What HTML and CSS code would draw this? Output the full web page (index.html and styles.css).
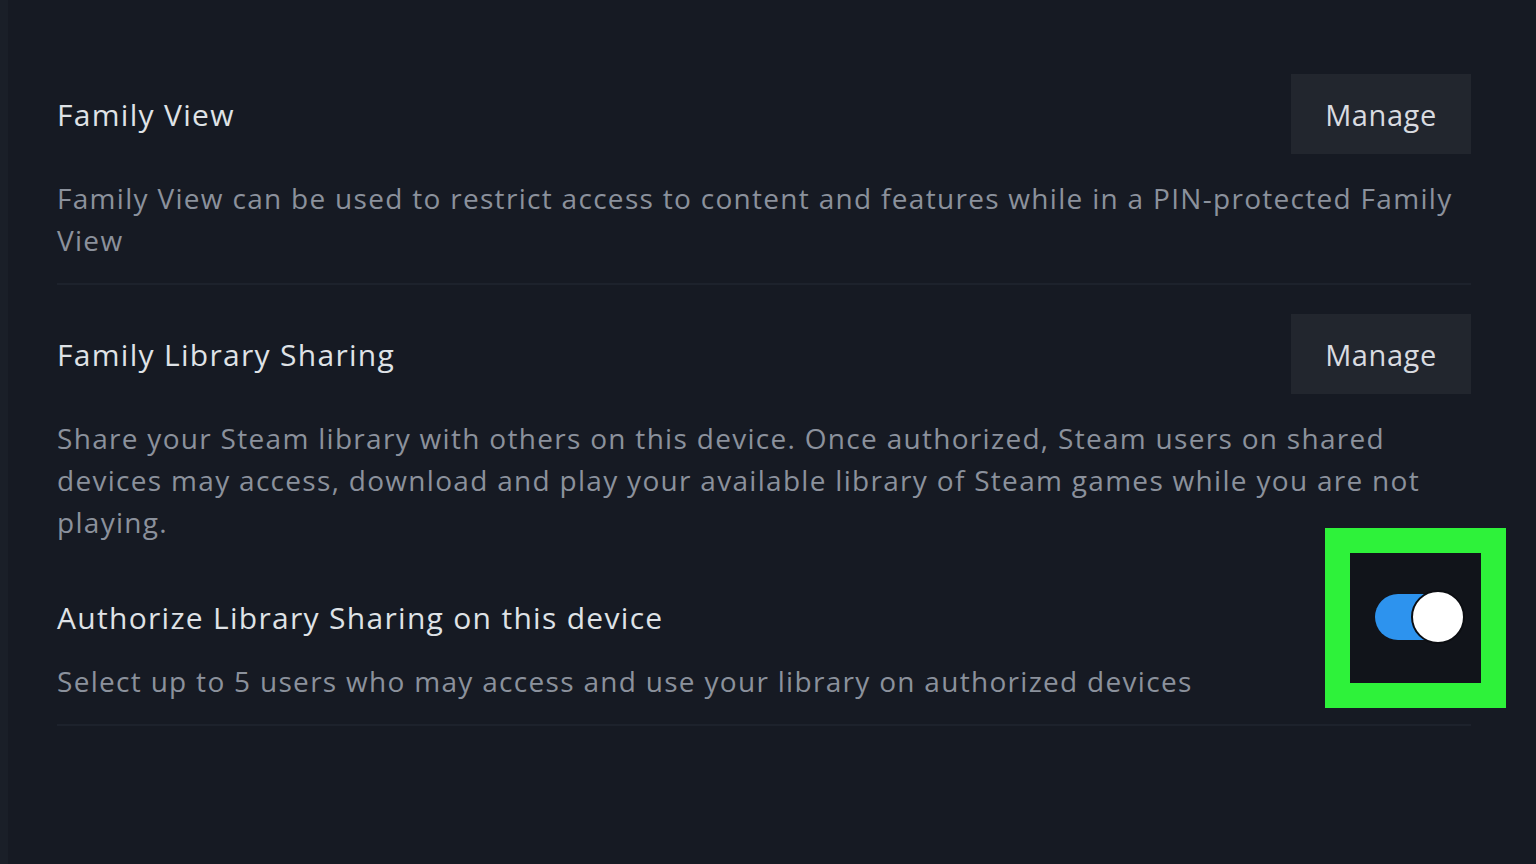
FILE: index.html
```html
<!DOCTYPE html>
<html lang="en">

<head>
    <meta charset="UTF-8">
    <meta name="viewport" content="width=device-width, initial-scale=1.0">
    <title>Family Settings</title>
    <link rel="stylesheet" href="styles.css">
</head>

<body>
    <div class="settings">
        <div class="section">
            <div class="row">
                <div class="title">Family View</div>
                <button class="btn-manage">Manage</button>
            </div>
            <div class="desc">Family View can be used to restrict access to content and features while in a PIN-protected Family View</div>
        </div>

        <div class="section">
            <div class="row">
                <div class="title">Family Library Sharing</div>
                <button class="btn-manage">Manage</button>
            </div>
            <div class="desc">Share your Steam library with others on this device. Once authorized, Steam users on shared devices may access, download and play your available library of Steam games while you are not playing.</div>

            <div class="row row-toggle">
                <div class="title">Authorize Library Sharing on this device</div>
                <div class="toggle-wrap">
                    <!-- highlight box from the screenshot -->
                    <div class="highlight"></div>
                    <div class="toggle on">
                        <div class="knob"></div>
                    </div>
                </div>
            </div>
            <div class="desc">Select up to 5 users who may access and use your library on authorized devices</div>
        </div>
    </div>
</body>

</html>
```

FILE: styles.css
```css
body {
    margin: 0;
    padding: 0;
    background-color: #161a23;
    font-family: "Open Sans", "Noto Sans", sans-serif;
    height: 864px;
    overflow: hidden;
    border-left: 8px solid #1a1f28;
    box-sizing: border-box;
}

.settings {
    padding: 74px 65px 0 49px;
}

.section {
    border-bottom: 2px solid #1d222c;
    padding-bottom: 22px;
    margin-bottom: 29px;
}

.row {
    display: flex;
    align-items: center;
    justify-content: space-between;
    height: 80px;
}

.title {
    font-size: 30px;
    color: #dfe2e6;
    letter-spacing: 1.3px;
}

.desc {
    margin-top: 23px;
    font-size: 28px;
    line-height: 42px;
    color: #8b919c;
    letter-spacing: 1.3px;
}

.btn-manage {
    width: 180px;
    height: 80px;
    background-color: #22262e;
    color: #d9dbe0;
    border: none;
    font-family: inherit;
    font-size: 29px;
    letter-spacing: 0.6px;
    cursor: pointer;
}

.row-toggle {
    margin-top: 53px;
    height: 42px;
}

.row-toggle + .desc {
    margin-top: 22px;
}

.toggle-wrap {
    position: relative;
    margin-right: 6px;
}

.highlight {
    position: absolute;
    left: -50px;
    top: -62px;
    width: 131px;
    height: 130px;
    border: 25px solid #2ef23a;
    background-color: #11141a;
}

.toggle {
    position: relative;
    width: 90px;
    height: 54px;
}

.toggle::before {
    content: "";
    position: absolute;
    left: 0;
    top: 4px;
    width: 84px;
    height: 46px;
    border-radius: 23px;
    background-color: #2d93ee;
}

.knob {
    position: absolute;
    right: 0;
    top: 0;
    width: 50px;
    height: 50px;
    border-radius: 50%;
    background-color: #ffffff;
    border: 2px solid #0c0e12;
}
```
